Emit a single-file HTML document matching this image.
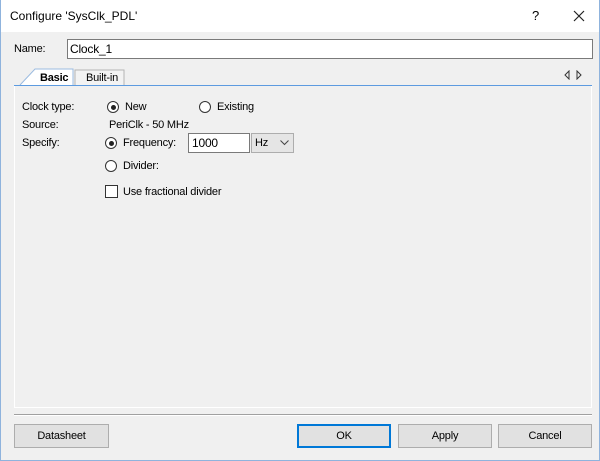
<!DOCTYPE html><html><head><style>
body{margin:0;width:600px;height:461px;overflow:hidden;background:#f0f0f0;font-family:"Liberation Sans",Arial,sans-serif;font-size:11px;letter-spacing:-0.2px;color:#000;position:relative}
.a{position:absolute}
.rb{position:absolute;width:12px;height:12px;border:1px solid #333;border-radius:50%;background:#fff;box-sizing:border-box}
.rb.on::after{content:"";position:absolute;left:2.5px;top:2.5px;width:5px;height:5px;border-radius:50%;background:#222}
.btn{position:absolute;height:24px;box-sizing:border-box;border:1px solid #adadad;background:#e1e1e1;text-align:center;line-height:22px;font-size:11px}
</style></head><body>
<div class="a" style="left:0;top:0;width:600px;height:461px;box-sizing:border-box;border:1px solid #8fb3dd;border-top:none"></div>
<div class="a" style="left:1px;top:0;width:598px;height:32px;background:#fff"></div>
<div class="a" style="left:10px;top:9px;font-size:12px;letter-spacing:0">Configure 'SysClk_PDL'</div>
<div class="a" style="left:532px;top:8px;font-size:13px">?</div>
<svg class="a" style="left:573px;top:10px" width="12" height="12"><path d="M1 1L11 11M11 1L1 11" stroke="#222" stroke-width="1.2"/></svg>
<div class="a" style="left:14px;top:43px">Name:</div>
<div class="a" style="left:67px;top:39px;width:526px;height:20px;box-sizing:border-box;border:1px solid #7a7a7a;background:#fff;padding:2px 2px;font-size:12px">Clock_1</div>
<svg class="a" style="left:14px;top:66px" width="580" height="21"><path d="M6 19L21 3L59 3L59 20" fill="#fff" stroke="#9bbbe0"/><path d="M61 20L61 4L110 4L110 20" fill="#f3f3f3" stroke="#b5b5b5"/><path d="M0 19.5H578" stroke="#5d9be0"/></svg>
<div class="a" style="left:40px;top:72px;font-weight:bold">Basic</div>
<div class="a" style="left:86px;top:72px">Built-in</div>
<svg class="a" style="left:564px;top:70px" width="20" height="10"><path d="M5 1L1 5L5 9Z" fill="none" stroke="#333"/><path d="M13 1L17 5L13 9Z" fill="none" stroke="#333"/></svg>
<div class="a" style="left:14px;top:86px;width:578px;height:322px;box-sizing:border-box;border:1px solid #fff;border-top:none;background:#f0f0f0"></div>
<div class="a" style="left:22px;top:101px">Clock type:</div>
<div class="rb on" style="left:107px;top:101px"></div><div class="a" style="left:125px;top:101px">New</div>
<div class="rb" style="left:199px;top:101px"></div><div class="a" style="left:217px;top:101px">Existing</div>
<div class="a" style="left:22px;top:119px">Source:</div>
<div class="a" style="left:109px;top:119px">PeriClk - 50 MHz</div>
<div class="a" style="left:22px;top:137px">Specify:</div>
<div class="rb on" style="left:105px;top:137px"></div><div class="a" style="left:123px;top:137px">Frequency:</div>
<div class="a" style="left:188px;top:133px;width:62px;height:20px;box-sizing:border-box;border:1px solid #7a7a7a;background:#fff;padding:2px 3px;font-size:12px">1000</div>
<div class="a" style="left:251px;top:133px;width:43px;height:20px;box-sizing:border-box;border:1px solid #adadad;background:#e5e5e5;padding:3px 3px">Hz</div>
<svg class="a" style="left:280px;top:140px" width="9" height="6"><path d="M0.5 0.5L4.5 4.5L8.5 0.5" fill="none" stroke="#444"/></svg>
<div class="rb" style="left:105px;top:160px"></div><div class="a" style="left:123px;top:160px">Divider:</div>
<div class="a" style="left:105px;top:185px;width:13px;height:13px;box-sizing:border-box;border:1px solid #333;background:#fff"></div>
<div class="a" style="left:123px;top:186px">Use fractional divider</div>
<div class="a" style="left:14px;top:414px;width:578px;height:1px;background:#a0a0a0"></div>
<div class="a" style="left:14px;top:415px;width:578px;height:1px;background:#fff"></div>
<div class="btn" style="left:14px;top:424px;width:95px">Datasheet</div>
<div class="btn" style="left:297px;top:424px;width:94px;border:1px solid #0078d7;box-shadow:inset 0 0 0 1px #0078d7">OK</div>
<div class="btn" style="left:398px;top:424px;width:94px">Apply</div>
<div class="btn" style="left:498px;top:424px;width:94px">Cancel</div>
</body></html>
